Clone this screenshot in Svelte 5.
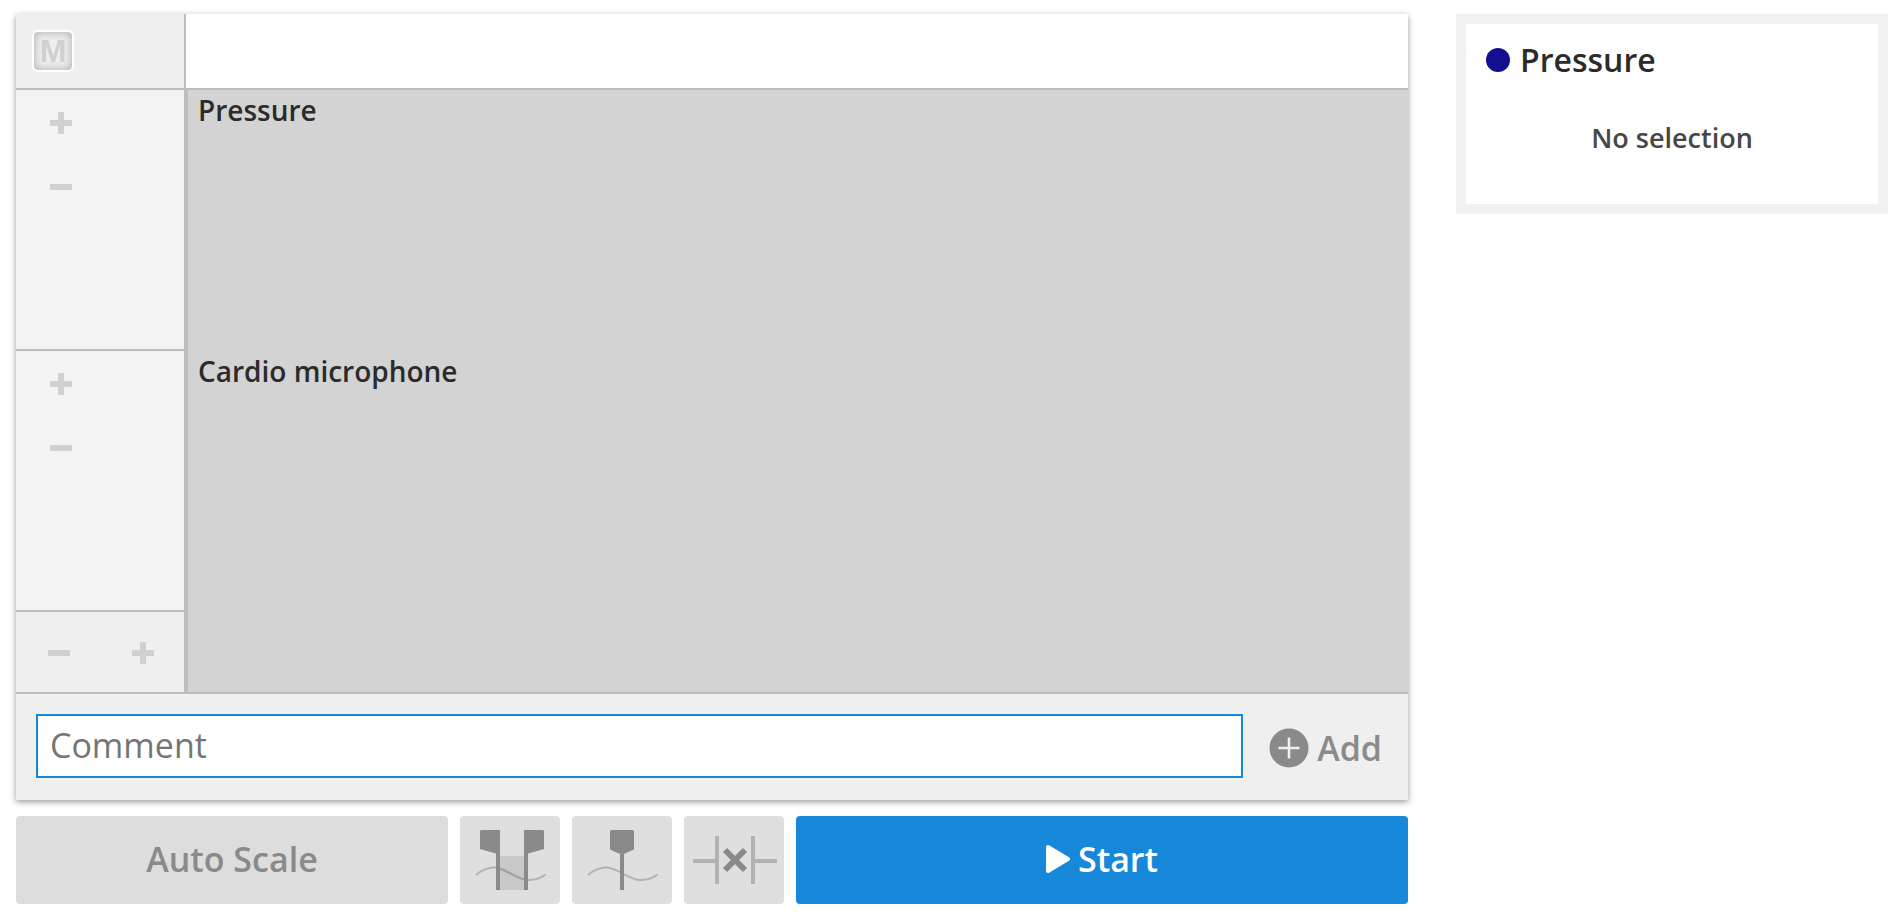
<script lang="ts">
	const channels = ['Pressure', 'Cardio microphone'];

	let comment = $state('');
</script>

{#snippet plus()}
	<svg class="sign" viewBox="0 0 22 22" aria-hidden="true"><path d="M8 0h6v8h8v6h-8v8H8v-8H0V8h8z" /></svg>
{/snippet}

{#snippet minus()}
	<svg class="sign" viewBox="0 0 22 22" aria-hidden="true"><path d="M0 8h22v6H0z" /></svg>
{/snippet}

<div class="page">
	<main class="recorder">
		<section class="scope">
			<div class="row marks">
				<div class="side">
					<button class="marker" type="button" aria-label="Marker">M</button>
				</div>
				<div class="timeline"></div>
			</div>

			{#each channels as name}
				<div class="row channel">
					<div class="side zoom">
						<button class="icon-btn" type="button" aria-label="Zoom in {name}">{@render plus()}</button>
						<button class="icon-btn" type="button" aria-label="Zoom out {name}">{@render minus()}</button>
					</div>
					<div class="plot"><h2 class="channel-name">{name}</h2></div>
				</div>
			{/each}

			<div class="row timebase">
				<div class="side time-zoom">
					<button class="icon-btn" type="button" aria-label="Compress time">{@render minus()}</button>
					<button class="icon-btn" type="button" aria-label="Expand time">{@render plus()}</button>
				</div>
				<div class="plot"></div>
			</div>

			<form class="comment" onsubmit={(e) => e.preventDefault()}>
				<input class="comment-input" type="text" placeholder="Comment" aria-label="Comment" bind:value={comment} />
				<button class="add" type="submit">
					<svg class="add-icon" viewBox="0 0 40 40" aria-hidden="true">
						<circle cx="20" cy="20" r="19.5" fill="#8a8a8a" />
						<path d="M20 9.5v21M9.5 20h21" stroke="#efefef" stroke-width="2.6" />
					</svg>
					Add
				</button>
			</form>
		</section>

		<div class="toolbar">
			<button class="tool scale" type="button">Auto Scale</button>
			<button class="tool square" type="button" aria-label="Range selection">
				<svg viewBox="0 0 100 88" aria-hidden="true">
					<rect x="40" y="40" width="24" height="34" fill="#c9c9c9" />
					<path d="M16 59C22 54 28 51.5 34 51.5C46 51.5 56 64 69 64C76 64 81 62 85.5 58.5" fill="none" stroke="#b2b2b2" stroke-width="2" />
					<path d="M40 52.7C47 55 56 61.5 64 63.5" fill="none" stroke="#a0a0a0" stroke-width="2" />
					<path d="M21 14h19v60h-4V37.5L20 33V15z" fill="#8a8a8a" />
					<path d="M83 14H64v60h4V37.5L84 33V15z" fill="#8a8a8a" />
				</svg>
			</button>
			<button class="tool square" type="button" aria-label="Point selection">
				<svg viewBox="0 0 100 88" aria-hidden="true">
					<path d="M16 59C22 54 28 51.5 34 51.5C46 51.5 56 64 69 64C76 64 81 62 85.5 58.5" fill="none" stroke="#b2b2b2" stroke-width="2" />
					<path d="M39.5 14h21q1.5 0 1.5 1.5V33.5L52 38v36h-4V38l-10-4.5V15.5q0-1.5 1.5-1.5z" fill="#8a8a8a" />
				</svg>
			</button>
			<button class="tool square" type="button" aria-label="Clear selection">
				<svg viewBox="0 0 100 88" aria-hidden="true">
					<path d="M9 45h22M71 45h22M33 20v48M69 20v48" stroke="#b2b2b2" stroke-width="4" />
					<path d="M41 34L61 54M61 34L41 54" stroke="#8a8a8a" stroke-width="6" />
				</svg>
			</button>
			<button class="tool start" type="button">
				<svg class="play" viewBox="0 0 24 30" aria-hidden="true">
					<path d="M2 3V27L22 15z" fill="#fff" stroke="#fff" stroke-width="4" stroke-linejoin="round" />
				</svg>
				Start
			</button>
		</div>
	</main>

	<aside class="readout">
		<h2 class="readout-title"><span class="dot"></span>Pressure</h2>
		<p class="readout-text">No selection</p>
	</aside>
</div>

<style>
	:global(body) { background: #fff; font-family: "Open Sans", sans-serif; font-weight: 600; color: #2b2b2b; }

	.page {
		display: flex; gap: 48px; align-items: flex-start;
		box-sizing: border-box; min-height: 100vh;
		padding: 14px 12px 12px 16px;
	}
	.page * { box-sizing: border-box; }
	button { font: inherit; border: none; padding: 0; margin: 0; background: none; cursor: pointer; }
	svg { display: block; }

	.recorder { flex: 1; min-width: 0; align-self: stretch; display: flex; flex-direction: column; gap: 16px; }
	.scope { flex: 1; display: flex; flex-direction: column; background: #efefef; box-shadow: 0 2px 6px rgba(0,0,0,0.4); }

	/* Channel rows */
	.row { display: flex; }
	.side { width: 168px; flex: none; border-bottom: 2px solid #bdbdbd; }
	.marks { height: 76px; }
	.marks .side { padding: 16px; }
	.timeline { flex: 1; background: #fff; border-left: 2px solid #bdbdbd; border-bottom: 2px solid #bdbdbd; }
	.marker {
		display: block; width: 42px; height: 42px;
		border: 2px solid #fff; border-radius: 6px;
		background: #efefef; box-shadow: inset 0 0 8px 1px #b4b4b4;
		font: bold 32px/38px "Liberation Sans", sans-serif; color: #d0d0d0;
	}

	.channel { flex: 1; min-height: 140px; }
	.zoom { display: flex; flex-direction: column; gap: 42px; padding: 22px 34px; background: #f3f3f3; }
	.icon-btn { width: 22px; height: 22px; }
	.sign { width: 22px; height: 22px; fill: #d0d0d0; }
	.plot { flex: 1; padding: 0 10px; background: #d3d3d3; border-left: 4px solid #bdbdbd; }
	.channel-name { margin: 0; font-size: 28px; line-height: 40px; font-weight: 600; }

	.timebase { height: 82px; }
	.timebase .plot { border-bottom: 2px solid #bdbdbd; }
	.time-zoom { display: flex; align-items: center; justify-content: space-between; padding: 2px 30px 0 32px; }

	/* Comment bar */
	.comment { display: flex; align-items: center; gap: 26px; padding: 20px 26px 22px 20px; }
	.comment-input {
		flex: 1; min-width: 0; height: 64px; padding: 0 12px 2px;
		border: 2px solid #1787da; border-radius: 0; outline: none; background: #fff;
		font: 400 34px/46px "Open Sans", sans-serif; color: #2b2b2b;
	}
	.comment-input::placeholder { color: #757575; opacity: 1; }
	.add { display: flex; align-items: center; gap: 8px; padding-top: 4px; font-size: 34px; line-height: 46px; color: #8a8a8a; }
	.add-icon { width: 40px; height: 40px; }

	/* Toolbar */
	.toolbar { display: flex; gap: 12px; }
	.tool {
		height: 88px; border-radius: 4px; background: #dfdfdf;
		font-size: 34px; line-height: 46px; color: #8a8a8a;
	}
	.scale { flex: 432; padding-bottom: 2px; background: #ddd; }
	.square { width: 100px; flex: none; }
	.start { flex: 612; display: flex; align-items: center; justify-content: center; gap: 8px; padding-bottom: 2px; background: #1787da; color: #fff; }
	.play { width: 24px; height: 30px; }

	/* Selection readout */
	.readout { width: 432px; flex: none; height: 200px; padding: 14px 20px; border: 10px solid #f1f1f1; }
	.readout-title { display: flex; align-items: center; gap: 10px; margin: 0; font-size: 32px; line-height: 44px; font-weight: 600; }
	.dot { width: 24px; height: 24px; border-radius: 50%; background: #140f91; }
	.readout-text { margin: 36px 0 0; font-size: 27px; line-height: 40px; text-align: center; color: #474747; }
</style>
